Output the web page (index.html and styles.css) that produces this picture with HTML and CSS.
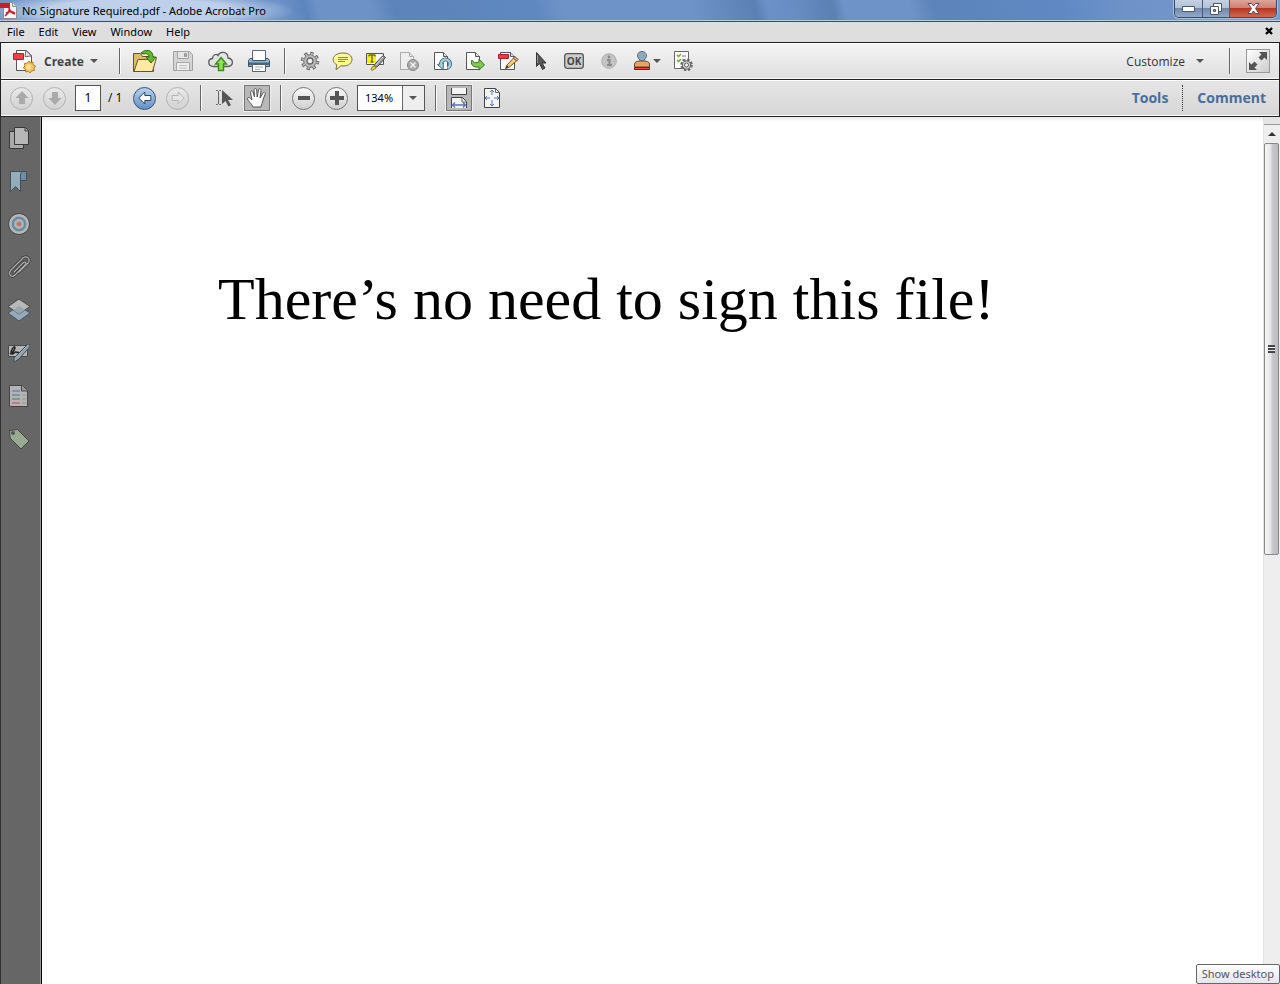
FILE: index.html
```html
<!DOCTYPE html>
<html lang="en">
<head>
    <meta charset="UTF-8">
    <meta name="viewport" content="width=device-width, initial-scale=1.0">
    <title>No Signature Required.pdf - Adobe Acrobat Pro</title>
    <link rel="stylesheet" href="styles.css">
</head>
<body>
    <header class="titlebar">
        <svg class="app-icon" width="17" height="17" viewBox="0 0 17 17"><path d="M3.500 .5h9l4 4v12h-13z" fill="#f8f4f4" stroke="#8d8d95"/><path d="M12.500 .5v4h4" fill="#ddd" stroke="#8d8d95"/><path d="M0 1h10v5H0z" fill="#c81e2b"/><path d="M9 5c1 3 0 6-4 9M9 6c1 4 3 5 6 6M6 11c3-2 6-2 9 0" fill="none" stroke="#c81e2b" stroke-width="1.500"/></svg>
        <h1>No Signature Required.pdf - Adobe Acrobat Pro</h1>
        <div class="window-buttons">
            <button class="win" aria-label="Minimize"><svg width="13" height="6" viewBox="0 0 13 6"><path d="M.5.5h12v5H.5z" fill="#fff" stroke="#4c566b"/></svg></button>
            <button class="win restore" aria-label="Restore"><svg width="12" height="12" viewBox="0 0 12 12"><path d="M3.500.5h8v8h-8z" fill="#fff" stroke="#4c566b"/><path d="M.5 3.500h8v8h-8z" fill="#fff" stroke="#4c566b"/><path d="M3.500 6.500h2v2h-2z" fill="#8aa0c0" stroke="#4c566b"/></svg></button>
            <button class="win close" aria-label="Close"><svg width="13" height="11" viewBox="0 0 13 11"><path d="M1 .5h3.500l2 2.500 2-2.500H12L8.500 5.500l3.500 5H8.500l-2-2.500-2 2.500H1l3.500-5z" fill="#fff" stroke="#5b4550"/></svg></button>
        </div>
    </header>

    <nav class="menubar">
        <button>File</button>
        <button>Edit</button>
        <button>View</button>
        <button>Window</button>
        <button>Help</button>
        <button class="close-doc" aria-label="Close document"><svg width="8" height="8" viewBox="0 0 8 8"><path d="M1 1l6 6M7 1L1 7" stroke="#000" stroke-width="2.400"/></svg></button>
    </nav>

    <div class="toolbar">
        <button class="create">
            <svg width="24" height="24" viewBox="0 0 24 24"><path d="M4.500 1.500h10l5 5v15h-15z" fill="#fff" stroke="#555"/><path d="M14 1.500l-1 6 6.500-.5z" fill="#e8e8e8" stroke="#666"/><path d="M1.500 4.500h10v6h-10z" fill="#e5444b" stroke="#b3202b"/><path d="M17 12l1.500 2 2.500-.8.300 2.600 2.200 1.200-1.500 2 .3 2.600-2.600.2-1.500 2.200-2-1.600-2.500.6-.2-2.600-2.200-1.400 1.600-2-.5-2.500 2.600-.3z" fill="#f6c45c" stroke="#b77c24"/><circle cx="16.500" cy="18" r="2.500" fill="#ffe49a"/></svg>
            <span>Create</span>
            <i class="caret"></i>
        </button>
        <i class="sep"></i>
        <div class="group file">
            <button aria-label="Open"><svg width="26" height="24" viewBox="0 0 26 24"><path d="M1.500 22.500v-18h7l2 3h11v15z" fill="#dcbc69" stroke="#655229"/><path d="M2 22.500l4-12h10l2-2h6.500l-4 14z" fill="#ffe8a4" stroke="#655229"/><path d="M9 4c4-4 12-4 12 4h3l-5 6-5-6h3c0-3-3-4-5-3z" fill="#67b72e" stroke="#2d6d12"/></svg></button>
            <button aria-label="Save" disabled><svg width="22" height="22" viewBox="0 0 22 22"><path d="M1.500 1.500h16l3 3v16h-19z" fill="#d5d5d5" stroke="#a0a0a0"/><path d="M5.500 1.500h11v7h-11z" fill="#e6e6e6" stroke="#a0a0a0"/><path d="M12.500 3.500h2v3h-2z" fill="#aaa" stroke="#999"/><path d="M4.500 12.500h13v8h-13z" fill="#efefef" stroke="#a5a5a5"/><path d="M7 15.500h8M7 18h8" stroke="#bbb"/></svg></button>
            <button aria-label="Upload"><svg width="26" height="24" viewBox="0 0 26 24"><path d="M6 17.500c-7 0-6.500-8-1.500-8 0-4 4-5 5.500-3 2-5 10-4 10 2.500 6 1 6 8.500-1 8.500z" fill="#e4e4e4" stroke="#5b5b5b" stroke-width="1.300"/><path d="M13 8.500l5.500 6.500H15.500v6.500h-5V15H7.500z" fill="#91e052" stroke="#348c19" stroke-width="1.400"/></svg></button>
            <button aria-label="Print"><svg width="24" height="24" viewBox="0 0 24 24"><path d="M5.500 1.500h13v10h-13z" fill="#fff" stroke="#5e6670"/><path d="M3 9.500h2.500v2h13v-2H21l1.500 2v6h-21v-6z" fill="#90b6d4" stroke="#3c5368"/><path d="M2 13.500h20v2.500H2z" fill="#426783"/><path d="M5.500 15.500h13v7h-13z" fill="#fff" stroke="#57616c"/><path d="M8 18h8M8 20.500h5" stroke="#aaa"/></svg></button>
        </div>
        <i class="sep"></i>
        <div class="group quick">
            <button aria-label="Preferences"><svg width="20" height="20" viewBox="0 0 20 20"><circle cx="10" cy="10" r="7.500" fill="none" stroke="#666" stroke-width="3.400" stroke-dasharray="3.200 2.690"/><circle cx="10" cy="10" r="6.300" fill="#bbb" stroke="#666"/><circle cx="10" cy="10" r="7" fill="none" stroke="#b5b5b5" stroke-width="2.600" stroke-dasharray="1.800 3.700" stroke-dashoffset="-.6"/><circle cx="10" cy="10" r="3" fill="#eee" stroke="#666" stroke-width="1.300"/></svg></button>
            <button aria-label="Add comment"><svg width="22" height="20" viewBox="0 0 22 20"><path d="M11 2c12 0 12 13 0 13l-2-.2-5 4 .8-5C-2 10 1 2 11 2z" fill="#fff793" stroke="#777047"/><path d="M6 6.500h10M6 8.500h10M6 10.500h7" stroke="#8a8250"/></svg></button>
            <button aria-label="Highlight text"><svg width="22" height="20" viewBox="0 0 22 20"><path d="M1.500 2.500h17v11h-17z" fill="#fff" stroke="#555"/><path d="M2 3h9v9H2z" fill="#ffed18"/><path d="M4 5.500V4h6v1.500M7 4v7M5.500 11h3" fill="none" stroke="#333"/><path d="M18 4.500l2.500 2-8 9-4 2 1-4z" fill="#999" stroke="#444"/><path d="M18 6l-7 8" stroke="#ddd"/><path d="M7 16l3-1 1 2-3 2H6z" fill="#e8da28" stroke="#8c8424"/></svg></button>
            <button aria-label="Delete page" disabled><svg width="20" height="20" viewBox="0 0 20 20"><path d="M1.500 1.500h9l4 4v13h-13z" fill="#eee" stroke="#aaa"/><path d="M10.500 1.500v4h4" fill="#ddd" stroke="#aaa"/><circle cx="14" cy="14" r="5.500" fill="#aaa" stroke="#888"/><path d="M11.500 11.500l5 5m0-5l-5 5" stroke="#eee" stroke-width="1.500"/></svg></button>
            <button aria-label="Rotate page"><svg width="20" height="20" viewBox="0 0 20 20"><path d="M2.500 1.500h9l4 4v13h-13z" fill="#fff" stroke="#555"/><path d="M11.500 1.500v4h4" fill="#ddd" stroke="#555"/><path d="M15.500 17a4.500 4.500 0 1 0-6-2" fill="none" stroke="#446c83" stroke-width="4"/><path d="M5.500 13.500l6-1.500-.5 6.500z" fill="#a6cce0" stroke="#446c83"/><path d="M15.500 17a4.500 4.500 0 1 0-6-2" fill="none" stroke="#a6cce0" stroke-width="2.200"/></svg></button>
            <button aria-label="Extract page"><svg width="20" height="20" viewBox="0 0 20 20"><path d="M1.500 1.500h9l4 4v13h-13z" fill="#fff" stroke="#555"/><path d="M10.500 1.500v4h4" fill="#ddd" stroke="#555"/><path d="M7 9c1 3 4 3 7 2V8l5.500 6-5.500 5v-3c-6 1-9-3-7-7z" fill="#83ca50" stroke="#2d721d"/></svg></button>
            <button aria-label="Edit document"><svg width="22" height="20" viewBox="0 0 22 20"><path d="M3.500 1.500h10l4 4v13h-14z" fill="#fff" stroke="#555"/><path d="M13.500 1.500v4h4" fill="#ddd" stroke="#555"/><path d="M1.500 3.500h10v4h-10z" fill="#ee3944" stroke="#b3202b"/><path d="M17.500 6l3 3-8 7-4 1.500L10 14z" fill="#f3cd80" stroke="#76501c"/><path d="M16.500 7l3 3 1.500-1.500-3-3z" fill="#eda69d" stroke="#76501c"/><path d="M10 14.500l1.500 1.500-3 1.500z" fill="#222"/></svg></button>
            <button aria-label="Select object"><svg width="14" height="20" viewBox="0 0 14 20"><path d="M2.500 1.500v14l3-3 3 6 2.500-1.500-3-5h4z" fill="#555" stroke="#333"/><path d="M3.500 4v8" stroke="#999"/></svg></button>
            <button aria-label="Button field"><svg width="20" height="16" viewBox="0 0 20 16"><rect x=".7" y=".7" width="18.600" height="14.600" rx="2.500" fill="#ccc" stroke="#555" stroke-width="1.300"/><text class="ok-label" x="10" y="12" text-anchor="middle">OK</text></svg></button>
            <button class="info" aria-label="Information" disabled><svg width="16" height="16" viewBox="0 0 16 16"><circle cx="8" cy="8" r="7.300" fill="#c4c4c4" stroke="#b0b0b0"/><path d="M6 7h2.500v5M6 12h5" fill="none" stroke="#888" stroke-width="2"/><circle cx="8" cy="4" r="1.400" fill="#888"/></svg></button>
            <button class="stamp" aria-label="Stamp"><svg width="18" height="20" viewBox="0 0 18 20"><path d="M7 11V9C3 6 4 .5 9 .5S15 6 11 9v2z" fill="#8ba9bf" stroke="#596d7c"/><path d="M1.500 16v-3c0-2 3-3 5-3h5c2 0 5 1 5 3v3z" fill="#e7a368" stroke="#694326"/><path d="M1.500 16.500h15v2h-15z" fill="#ea4a42" stroke="#463030"/></svg><i class="caret"></i></button>
            <button aria-label="Checklist"><svg width="20" height="20" viewBox="0 0 20 20"><path d="M1.500 .5h14v17h-14z" fill="#fff" stroke="#666"/><path d="M4 4l1.500 1.500L8 3M4 9l1.500 1.500L8 8" fill="none" stroke="#59b42b" stroke-width="1.500"/><path d="M9 5h4M9 9h3" stroke="#777"/><circle cx="13.500" cy="14" r="5" fill="none" stroke="#666" stroke-width="2.500" stroke-dasharray="2.300 1.630"/><circle cx="13.500" cy="14" r="4.200" fill="#ccc" stroke="#666"/><circle cx="13.500" cy="14" r="2" fill="#fff" stroke="#666"/></svg></button>
        </div>
        <button class="customize">Customize <i class="caret"></i></button>
        <i class="sep"></i>
        <button class="expand" aria-label="Read mode"><svg width="18" height="18" viewBox="0 0 18 18"><path d="M10 0h8v8l-2.500-2.500-3 3-3-3 3-3zM0 10l2.500 2.500 3-3 3 3-3 3L8 18H0z" fill="#555"/></svg></button>
    </div>

    <div class="toolbar nav">
        <div class="group pages">
            <button class="round off" aria-label="Previous page" disabled><svg width="14" height="14" viewBox="0 0 14 14"><path d="M7 0l6.500 7H10v6H4V7H.5z" fill="#aaa"/></svg></button>
            <button class="round off" aria-label="Next page" disabled><svg width="14" height="14" viewBox="0 0 14 14"><path d="M7 14l6.500-7H10V1H4v6H.5z" fill="#aaa"/></svg></button>
        </div>
        <input class="page-number" type="text" value="1" aria-label="Page number">
        <span class="page-total">/ 1</span>
        <div class="group history">
            <button class="round back" aria-label="Previous view"><svg width="14" height="14" viewBox="0 0 14 14"><path d="M.8 7l6-6v3.500h6v5h-6V13z" fill="#fff" stroke="#33465e"/></svg></button>
            <button class="round off" aria-label="Next view" disabled><svg width="14" height="14" viewBox="0 0 14 14"><path d="M13.200 7l-6-6v3.500h-6v5h6V13z" fill="#e5e5e5" stroke="#b5b5b5"/></svg></button>
        </div>
        <i class="sep"></i>
        <div class="group select">
            <button aria-label="Selection tool"><svg width="20" height="20" viewBox="0 0 20 20"><path d="M2 2.500h1.500l1 1 1-1H7M4.500 3v13M2 16.500h1.500l1-1 1 1H7" fill="none" stroke="#666"/><path d="M8 2v14l3.500-3 3 5.500 2.500-1.500-3-5h5z" fill="#555"/></svg></button>
            <button class="pressed" aria-label="Hand tool"><svg width="22" height="22" viewBox="0 0 22 22"><path d="M7 20c-1-3-5-6-5.500-8 0-2 2-2 3-.5L6 13 4.500 5.500c-.3-2 2-2.500 2.500-.5L8.500 10 8 3c0-2 2.500-2 2.700 0l.5 7 1.300-7c.5-2 2.800-1.500 2.500.5L14 11l3-5c1-1.500 3-.5 2.200 1L17 13c-.5 3-1.500 4-2 7z" fill="#fff" stroke="#555"/></svg></button>
        </div>
        <i class="sep"></i>
        <div class="group zoom">
            <button class="round" aria-label="Zoom out"><svg width="14" height="14" viewBox="0 0 14 14"><path d="M1 5h12v4H1z" fill="#555"/></svg></button>
            <button class="round" aria-label="Zoom in"><svg width="14" height="14" viewBox="0 0 14 14"><path d="M5 0h4v5h5v4H9v5H5V9H0V5h5z" fill="#555"/></svg></button>
        </div>
        <div class="zoom-level">
            <select aria-label="Zoom level"><option>134%</option></select>
            <i class="caret"></i>
        </div>
        <i class="sep"></i>
        <div class="group fit">
            <button class="pressed" aria-label="Fit width"><svg width="20" height="22" viewBox="0 0 20 22"><path d="M2.500 1v6.500h15V1M2.500 21V10.500h11l4 4V21" fill="#f4f4f4" stroke="#444"/><path d="M13 11v4h4" fill="none" stroke="#666"/><path d="M4 18h12M6 15.500L3.500 18 6 20.500M14 15.500l2.500 2.500-2.500 2.500" fill="none" stroke="#5874b0" stroke-width="1.300"/></svg></button>
            <button aria-label="Fit page"><svg width="18" height="22" viewBox="0 0 18 22"><path d="M1.500 1.500h11l4 4v15h-15z" fill="#f4f4f4" stroke="#444"/><path d="M12.500 1.500v4h4" fill="none" stroke="#666"/><path d="M9 3v5M9 13v6M2 11h5M11 11h5M7 5l2-2 2 2M7 17l2 2 2-2M4 9l-2 2 2 2M14 9l2 2-2 2" fill="none" stroke="#5874b0"/></svg></button>
        </div>
        <button class="pane-link tools">Tools</button>
        <i class="dots"></i>
        <button class="pane-link">Comment</button>
    </div>

    <div class="workspace">
        <aside class="sidebar">
            <button aria-label="Page thumbnails"><svg width="22" height="24" viewBox="0 0 22 24"><path d="M1.500 5.500h14v17h-14z" fill="#aaa" stroke="#383838"/><path d="M6.500 1.500h11l3 3v14h-14z" fill="#b8b8b8" stroke="#383838"/><path d="M17 1.500v3.500h3.500" fill="#999" stroke="#444"/></svg></button>
            <button aria-label="Bookmarks"><svg width="20" height="24" viewBox="0 0 20 24"><path d="M11.500 2.500h6v9h-6z" fill="#6e8fa3" stroke="#40515e"/><path d="M1.500 2.500h12c-2 1-2 3-2 5v15l-5-5-5 5z" fill="#94abb9" stroke="#40515e"/></svg></button>
            <button aria-label="Destinations"><svg width="24" height="24" viewBox="0 0 24 24"><circle cx="12" cy="12" r="10.500" fill="#b8b8b8" stroke="#454545"/><circle cx="12" cy="12" r="6.200" fill="#b4b4b4" stroke="#658da3" stroke-width="2.500"/><circle cx="12" cy="12" r="2.500" fill="#bd7777"/></svg></button>
            <button aria-label="Attachments"><svg width="24" height="24" viewBox="0 0 24 24"><g fill="none" stroke-linecap="round"><path d="M7 17l9-9c2-2 4 0 2 2L8 20c-3 3-8 0-4-5L16 3c4-3 8 1 5 5l-9 9" stroke="#3f3f3f" stroke-width="3"/><path d="M7 17l9-9c2-2 4 0 2 2L8 20c-3 3-8 0-4-5L16 3c4-3 8 1 5 5l-9 9" stroke="#aaa" stroke-width="1.300"/></g></svg></button>
            <button aria-label="Layers"><svg width="24" height="24" viewBox="0 0 24 24"><path d="M1 15l11-7 11 7-11 8z" fill="#94abbd" stroke="#4a5862"/><path d="M1 8.500L12 1l11 7.500L12 16z" fill="#b8b8b8" stroke="#494949"/><path d="M6 12l6-4 6 4-6 4z" fill="#98a8b0"/></svg></button>
            <button aria-label="Signatures"><svg width="24" height="20" viewBox="0 0 24 20"><path d="M1.500 2.500h19v11h-19z" fill="#b4b4b4" stroke="#494949"/><path d="M3 11c6-3 6-10 3-6s-2 8 1 5 2 1 5-1" fill="none" stroke="#222" stroke-width="1.500"/><path d="M20.500 1.500c2 0 3 1 2 2.500L12 16l-5 3 0-4z" fill="#91a6b4" stroke="#43515b"/></svg></button>
            <button aria-label="Content"><svg width="22" height="24" viewBox="0 0 22 24"><path d="M1.500 1.500h13l5 5v16h-18z" fill="#b4b4b4" stroke="#444"/><path d="M13.500 1.500v5.500h6" fill="#999" stroke="#444"/><path d="M4 7h8M4 11h8" stroke="#7b95ac" stroke-width="2"/><path d="M4 15h8" stroke="#819979" stroke-width="2"/><path d="M4 19h8" stroke="#bf7d7d" stroke-width="2"/><path d="M14 11h4M14 15h4M14 19h4" stroke="#999"/></svg></button>
            <button aria-label="Tags"><svg width="22" height="22" viewBox="0 0 22 22"><path d="M1.500 2.500l8-1L21 13l-8 8L2 10z" fill="#98aa91" stroke="#404a3c"/><circle cx="5" cy="5" r="2" fill="#555"/></svg></button>
        </aside>
        <main class="document">
            <p>There’s no need to sign this file!</p>
        </main>
        <div class="scrollbar">
            <div class="splitter"></div>
            <button class="up" aria-label="Scroll up"><svg width="8" height="4" viewBox="0 0 8 4"><path d="M4 0l4 4H0z" fill="#333"/></svg></button>
            <div class="track">
                <div class="thumb"><i class="grip"></i></div>
            </div>
        </div>
    </div>

    <div class="tooltip" role="tooltip">Show desktop</div>
</body>
</html>
```
FILE: styles.css
```css
:root {
    --ui-font: "Noto Sans", "Open Sans", sans-serif;
    --toolbar-font: "Open Sans", "Noto Sans", sans-serif;
    --line: #222;
    --icon-gray: #555;
    --blue: #4a6d9c;
}

* {
    box-sizing: border-box;
}

body {
    margin: 0;
    min-height: 100vh;
    display: flex;
    flex-direction: column;
    position: relative;
    font-family: var(--ui-font);
    font-size: 11px;
    color: #000;
    background: #fff;
}

button {
    display: flex;
    align-items: center;
    justify-content: center;
    padding: 0;
    border: 0;
    background: none;
    font: inherit;
    color: inherit;
}

svg {
    display: block;
    flex: none;
}

/* window frame */

.titlebar {
    display: flex;
    align-items: center;
    height: 22px;
    border-bottom: 1px solid #3c4c6b;
    box-shadow: inset 0 -1px #b9cae4;
    background:
        radial-gradient(ellipse 155px 20px at 140px 11px, rgba(225, 235, 248, 0.7) 60%, transparent 100%),
        linear-gradient(75deg, #6e93c8 0%, #6e93c8 22%, #5d84bd 24%, #6d92c8 25%, #6d92c8 29%, #5c84ba 31%, #6088c0 42%, #6e93c8 44%, #6e93c8 54%, #5a80b4 59%, #6b90c8 60%, #678dc3 62%, #5a80b4 65%, #6e93c8 66%, #6e93c8 71%, #5c84ba 73%, #6089c4 83%, #6e93c8 88%, #7a9bd0 100%);
}

.titlebar h1 {
    margin: 0 auto 0 5px;
    font-size: 11px;
    font-weight: 400;
    line-height: 20px;
}

.window-buttons {
    display: flex;
    align-self: flex-start;
    height: 18px;
    margin-right: 3px;
    border: 1px solid #3b4a64;
    border-top: 0;
    border-radius: 0 0 5px 5px;
    box-shadow: 0 0 0 1px #a9c0e0;
    overflow: hidden;
}

.win {
    width: 28px;
    border-right: 1px solid #4b5b78;
    background: linear-gradient(#c5d1e3 0%, #b2c2da 45%, #7289ae 50%, #91a9cb 100%);
}

.win.restore {
    width: 27px;
}

.win.close {
    width: 46px;
    border-right: 0;
    background: linear-gradient(#dba59c 0%, #cf8073 45%, #b53825 50%, #d0694e 100%);
}

.menubar {
    display: flex;
    align-items: center;
    height: 20px;
    padding: 0 7px 2px;
    gap: 14px;
    background: #dedede;
}

.close-doc {
    margin-left: auto;
}

/* toolbars */

.toolbar {
    display: flex;
    align-items: center;
    height: 37px;
    padding: 0 9px 0 11px;
    border: 1px solid var(--line);
    border-bottom: 0;
    box-shadow: inset 0 1px #fff, inset 0 -1px #fafafa;
    background: linear-gradient(#f4f4f4, #dfdfdf);
    font-family: var(--toolbar-font);
}

.toolbar.nav {
    height: 38px;
    padding-left: 4px;
    padding-right: 13px;
    border-bottom: 1px solid var(--line);
    background: linear-gradient(#e6e6e6, #d6d6d6);
}

.group {
    display: flex;
    align-items: center;
}

.sep {
    width: 1px;
    height: 26px;
    background: #666;
    box-shadow: 1px 0 #fafafa;
}

.caret {
    flex: none;
    border: 4px solid transparent;
    border-top-color: var(--icon-gray);
    border-bottom: 0;
}

.create {
    margin-right: 21px;
    gap: 8px;
    font-size: 12px;
    font-weight: 700;
    color: #444;
}

.create .caret {
    margin-left: -2px;
}

.file {
    margin: 0 6px;
}

.file button {
    width: 38px;
}

.quick {
    margin-left: 9px;
}

.quick button {
    width: 33px;
}

.quick .info {
    width: 36px;
}

.quick .stamp {
    width: 40px;
    gap: 2px;
}

.ok-label {
    font-size: 10px;
    font-weight: 700;
    fill: #444;
}

.customize {
    margin-left: auto;
    margin-right: 25px;
    gap: 11px;
    font-size: 12px;
    color: #333;
}

.expand {
    width: 24px;
    height: 24px;
    margin-left: 16px;
    border: 1px solid #999;
    background: linear-gradient(135deg, #fff, #ccc);
}

.pages button,
.history button,
.zoom button {
    margin: 0 5px;
}

.round {
    width: 23px;
    height: 23px;
    border: 1px solid #777;
    border-radius: 50%;
    background: linear-gradient(#fafafa, #d0d0d0);
}

.round.off {
    border-color: #b2b2b2;
    background: linear-gradient(#e9e9e9, #d2d2d2);
}

.round.back {
    border-color: #3a506c;
    background: linear-gradient(#b6d2f0, #6291c8);
}

.page-number {
    width: 26px;
    height: 26px;
    margin-left: 4px;
    padding: 0 0 2px;
    border: 1px solid #555;
    background: #fff;
    font: 12px var(--ui-font);
    text-align: center;
}

.page-total {
    width: 27px;
    padding: 0 0 2px 7px;
    font-size: 12px;
    word-spacing: normal;
    white-space: nowrap;
}

.history {
    margin-right: 6px;
}

.select {
    margin: 0 10px;
}

.select button,
.fit button {
    width: 26px;
    height: 26px;
    border: 1px solid transparent;
}

.select button + button,
.fit button + button {
    margin-left: 7px;
}

.toolbar .pressed {
    border-color: #777;
    background: #b8b8b8;
    box-shadow: 0 0 0 1px #eee;
}

.zoom {
    margin: 0 4px 0 6px;
}

.zoom-level {
    display: flex;
    align-items: center;
    position: relative;
    width: 68px;
    height: 26px;
    margin-right: 10px;
    border: 1px solid #555;
    background: linear-gradient(90deg, #fff 44px, #666 44px, #666 45px, #eee 45px);
}

.zoom-level select {
    width: 100%;
    height: 24px;
    padding: 0 0 2px 7px;
    border: 0;
    background: none;
    font: 11px var(--ui-font);
    color: #000;
    appearance: none;
}

.zoom-level .caret {
    position: absolute;
    right: 7px;
    pointer-events: none;
}

.fit {
    margin-left: 10px;
}

.pane-link {
    padding-bottom: 2px;
    font-size: 14px;
    font-weight: 700;
    color: var(--blue);
}

.pane-link.tools {
    margin-left: auto;
}

.dots {
    height: 26px;
    margin: 0 14px;
    border-left: 1px dotted #333;
}

/* document area */

.workspace {
    display: flex;
    flex: 1;
}

.sidebar {
    flex: none;
    width: 42px;
    border-left: 1px solid #333;
    border-right: 1px solid #000;
    box-shadow: inset -1px 0 #999;
    background: #666;
}

.sidebar button {
    width: 36px;
    height: 43px;
    padding-bottom: 2px;
}

.document {
    flex: 1;
    padding: 146px 0 0 176px;
    background: linear-gradient(#e9e9e9, #fff 5px);
}

.document p {
    margin: 0;
    font-family: "Liberation Serif", "Times New Roman", serif;
    font-size: 60px;
    line-height: 72px;
}

.scrollbar {
    display: flex;
    flex-direction: column;
    width: 17px;
    border-left: 1px solid #e2e2e2;
    background: #eee;
}

.splitter {
    height: 8px;
    border-bottom: 1px solid #999;
    background: #e4e4e4;
}

.scrollbar .up {
    height: 18px;
}

.track {
    flex: 1;
}

.thumb {
    display: flex;
    align-items: center;
    justify-content: center;
    height: 49%;
    margin-right: 1px;
    border: 1px solid #888;
    border-radius: 2px;
    background: linear-gradient(90deg, #f8f8f8 0%, #e4e4e6 45%, #c9c9cd 55%, #bbbbc0 100%);
}

.grip {
    width: 7px;
    height: 8px;
    background: repeating-linear-gradient(#444 0, #444 2px, #eee 2px, #eee 3px);
}

.tooltip {
    position: absolute;
    right: 0;
    bottom: 0;
    padding: 0 5px;
    border: 1px solid #666;
    border-radius: 2px;
    background: linear-gradient(#fff, #e4e5f0);
    font-size: 11px;
    line-height: 18px;
    color: #555;
}
```
